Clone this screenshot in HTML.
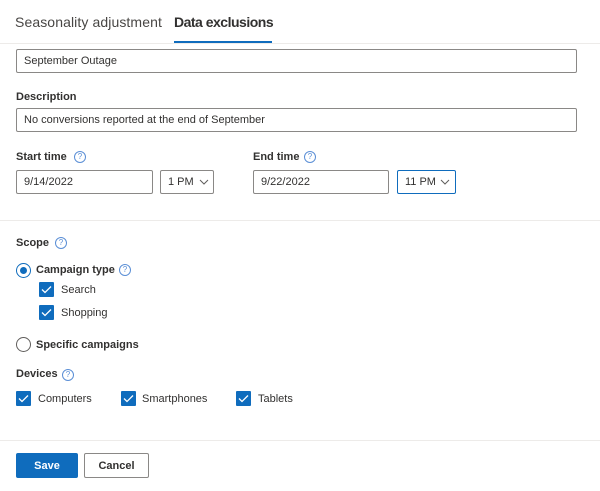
<!DOCTYPE html>
<html><head><style>
*{box-sizing:border-box;margin:0;padding:0}
body{width:600px;height:491px;background:#fff;font-family:"Liberation Sans",sans-serif;color:#323130;position:relative;overflow:hidden;font-size:11px}
.a{position:absolute}
.in{position:absolute;border:1px solid #8a8886;border-radius:2px;height:24px;padding-left:7px;line-height:22px;font-size:11px;color:#323130}
.lb{position:absolute;font-size:11px;font-weight:bold;color:#323130}
.hp{position:absolute;width:12px;height:12px;border:1px solid #5b8fd6;border-radius:50%;font-size:8px;color:#5b8fd6;text-align:center;line-height:10px}
.cb{position:absolute;width:15px;height:15px;background:#0f6cbd;border-radius:1px}
.cb svg{position:absolute;left:2px;top:3px}
.t{position:absolute;font-size:11px}
.chev{position:absolute;top:8px}
</style></head><body>
<div class="a" style="left:15px;top:14px;font-size:14px;color:#484644;letter-spacing:0.1px">Seasonality adjustment</div>
<div class="a" style="left:174px;top:14px;font-size:14px;font-weight:bold;color:#323130;letter-spacing:-0.5px">Data exclusions</div>
<div class="a" style="left:0;top:43px;width:600px;height:1px;background:#edebe9"></div>
<div class="a" style="left:174px;top:41px;width:98px;height:2px;background:#0f6cbd"></div>

<div class="in" style="left:16px;top:49px;width:561px">September Outage</div>
<div class="lb" style="left:16px;top:91px">Description</div>
<div class="in" style="left:16px;top:108px;width:561px">No conversions reported at the end of September</div>

<div class="lb" style="left:16px;top:151px">Start time</div>
<div class="hp" style="left:74px;top:151px">?</div>
<div class="in" style="left:16px;top:170px;width:137px">9/14/2022</div>
<div class="in" style="left:160px;top:170px;width:54px">1 PM<svg class="chev" style="left:38px" width="10" height="6"><path d="M1 1l4 4 4-4" stroke="#605e5c" fill="none"/></svg></div>
<div class="lb" style="left:253px;top:151px">End time</div>
<div class="hp" style="left:304px;top:151px">?</div>
<div class="in" style="left:253px;top:170px;width:136px">9/22/2022</div>
<div class="in" style="left:397px;top:170px;width:59px;border-color:#0f6cbd">11 PM<svg class="chev" style="left:42px" width="10" height="6"><path d="M1 1l4 4 4-4" stroke="#605e5c" fill="none"/></svg></div>

<div class="a" style="left:0;top:220px;width:600px;height:1px;background:#edebe9"></div>
<div class="lb" style="left:16px;top:237px">Scope</div>
<div class="hp" style="left:55px;top:237px">?</div>
<div class="a" style="left:16px;top:263px;width:15px;height:15px;border:1px solid #0f6cbd;border-radius:50%"><div class="a" style="left:3px;top:3px;width:7px;height:7px;border-radius:50%;background:#0f6cbd"></div></div>
<div class="lb" style="left:36px;top:264px">Campaign type</div>
<div class="hp" style="left:119px;top:264px">?</div>
<div class="cb" style="left:39px;top:282px"><svg width="11" height="9"><path d="M1 4.5l3 3 6-6" stroke="#fff" fill="none" stroke-width="1.3"/></svg></div>
<div class="t" style="left:61px;top:284px">Search</div>
<div class="cb" style="left:39px;top:305px"><svg width="11" height="9"><path d="M1 4.5l3 3 6-6" stroke="#fff" fill="none" stroke-width="1.3"/></svg></div>
<div class="t" style="left:61px;top:307px">Shopping</div>
<div class="a" style="left:16px;top:337px;width:15px;height:15px;border:1px solid #605e5c;border-radius:50%"></div>
<div class="lb" style="left:36px;top:339px">Specific campaigns</div>
<div class="lb" style="left:16px;top:368px">Devices</div>
<div class="hp" style="left:62px;top:369px">?</div>
<div class="cb" style="left:16px;top:391px"><svg width="11" height="9"><path d="M1 4.5l3 3 6-6" stroke="#fff" fill="none" stroke-width="1.3"/></svg></div>
<div class="t" style="left:38px;top:393px">Computers</div>
<div class="cb" style="left:121px;top:391px"><svg width="11" height="9"><path d="M1 4.5l3 3 6-6" stroke="#fff" fill="none" stroke-width="1.3"/></svg></div>
<div class="t" style="left:142px;top:393px">Smartphones</div>
<div class="cb" style="left:236px;top:391px"><svg width="11" height="9"><path d="M1 4.5l3 3 6-6" stroke="#fff" fill="none" stroke-width="1.3"/></svg></div>
<div class="t" style="left:258px;top:393px">Tablets</div>

<div class="a" style="left:0;top:440px;width:600px;height:1px;background:#edebe9"></div>
<div class="a" style="left:16px;top:453px;width:62px;height:25px;background:#0f6cbd;border-radius:2px;color:#fff;font-weight:bold;text-align:center;line-height:26px">Save</div>
<div class="a" style="left:84px;top:453px;width:65px;height:25px;border:1px solid #8a8886;border-radius:2px;font-weight:bold;text-align:center;line-height:24px">Cancel</div>
</body></html>
